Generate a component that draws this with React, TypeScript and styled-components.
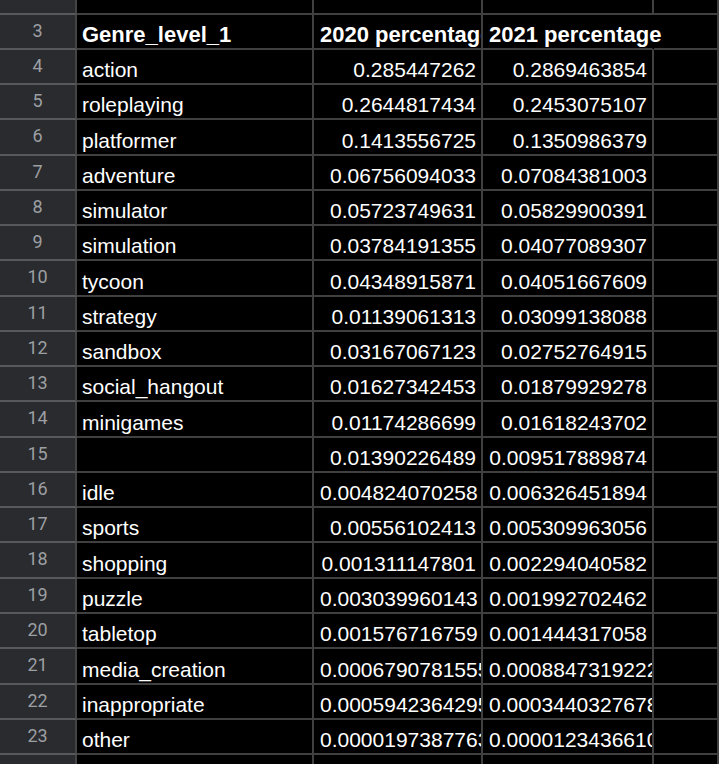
import styled, { createGlobalStyle } from 'styled-components'

const GlobalStyle = createGlobalStyle`
  html, body {
    margin: 0;
    padding: 0;
    background: #000;
  }
`

const Sheet = styled.div`
  width: 719px;
  height: 764px;
  overflow: hidden;
  display: flex;
  flex-direction: column;
  background: #000;
`

const Row = styled.div<{ $h: number }>`
  display: grid;
  grid-template-columns: 77px 237px 169px 171px 1fr;
  height: ${(p) => p.$h}px;
  flex-shrink: 0;
`

const RowHeader = styled.div`
  box-sizing: border-box;
  background: #2a2b2e;
  border-bottom: 2px solid #58595d;
  border-right: 2px solid #444;
  display: flex;
  align-items: center;
  justify-content: center;
  padding-bottom: 3px;
  color: #9c9fa3;
  font-family: Roboto, 'Liberation Sans', sans-serif;
  font-size: 18px;
`

const Cell = styled.div<{ $open?: boolean }>`
  box-sizing: border-box;
  min-width: 0;
  border-bottom: 2px solid #404040;
  border-right: 2px solid ${(p) => (p.$open ? 'transparent' : '#404040')};
  overflow: ${(p) => (p.$open ? 'visible' : 'hidden')};
  display: flex;
  flex-direction: column;
  justify-content: flex-end;
`

const Text = styled.div<{ $align: 'left' | 'right'; $bold?: boolean; $pl?: number }>`
  white-space: nowrap;
  text-align: ${(p) => p.$align};
  padding: 0 5px 1px ${(p) => p.$pl ?? 5}px;
  line-height: 24px;
  font-family: 'Liberation Sans', Arial, sans-serif;
  font-size: ${(p) => (p.$bold ? 22 : 21)}px;
  font-weight: ${(p) => (p.$bold ? 700 : 400)};
  color: #fff;
`

const data: [string, string, string][] = [
  ['action', '0.285447262', '0.2869463854'],
  ['roleplaying', '0.2644817434', '0.2453075107'],
  ['platformer', '0.1413556725', '0.1350986379'],
  ['adventure', '0.06756094033', '0.07084381003'],
  ['simulator', '0.05723749631', '0.05829900391'],
  ['simulation', '0.03784191355', '0.04077089307'],
  ['tycoon', '0.04348915871', '0.04051667609'],
  ['strategy', '0.01139061313', '0.03099138088'],
  ['sandbox', '0.03167067123', '0.02752764915'],
  ['social_hangout', '0.01627342453', '0.01879929278'],
  ['minigames', '0.01174286699', '0.01618243702'],
  ['', '0.01390226489', '0.009517889874'],
  ['idle', '0.004824070258', '0.006326451894'],
  ['sports', '0.00556102413', '0.005309963056'],
  ['shopping', '0.001311147801', '0.002294040582'],
  ['puzzle', '0.003039960143', '0.001992702462'],
  ['tabletop', '0.001576716759', '0.001444317058'],
  ['media_creation', '0.00067907815559', '0.00088473192227'],
  ['inappropriate', '0.00059423642953', '0.00034403276780'],
  ['other', '0.00001973877635', '0.00001234366100'],
]

// gridlines in the shot fall every ~35.3px, so some rows are one pixel taller
const heights = [35, 35, 35, 36, 35, 35, 35, 36, 35, 35, 35, 36, 35, 35, 35, 36, 35, 35, 36, 35, 35]

const EmptyRow = ({ h }: { h: number }) => (
  <Row $h={h}>
    <RowHeader />
    <Cell />
    <Cell />
    <Cell />
    <Cell />
  </Row>
)

const App = () => {
  return (
    <>
      <GlobalStyle />
      <Sheet>
        <EmptyRow h={15} />
        <Row $h={heights[0]}>
          <RowHeader>3</RowHeader>
          <Cell>
            <Text $align="left" $bold>Genre_level_1</Text>
          </Cell>
          <Cell>
            <Text $align="left" $bold $pl={6}>2020 percentage</Text>
          </Cell>
          <Cell $open>
            <Text $align="left" $bold $pl={6}>2021 percentage</Text>
          </Cell>
          <Cell />
        </Row>
        {data.map(([genre, a, b], i) => (
          <Row key={i} $h={heights[i + 1]}>
            <RowHeader>{i + 4}</RowHeader>
            <Cell>
              <Text $align="left">{genre}</Text>
            </Cell>
            <Cell>
              <Text $align="right" $pl={6}>{a}</Text>
            </Cell>
            <Cell>
              <Text $align="right" $pl={6}>{b}</Text>
            </Cell>
            <Cell />
          </Row>
        ))}
        <EmptyRow h={20} />
      </Sheet>
    </>
  )
}

export default App
